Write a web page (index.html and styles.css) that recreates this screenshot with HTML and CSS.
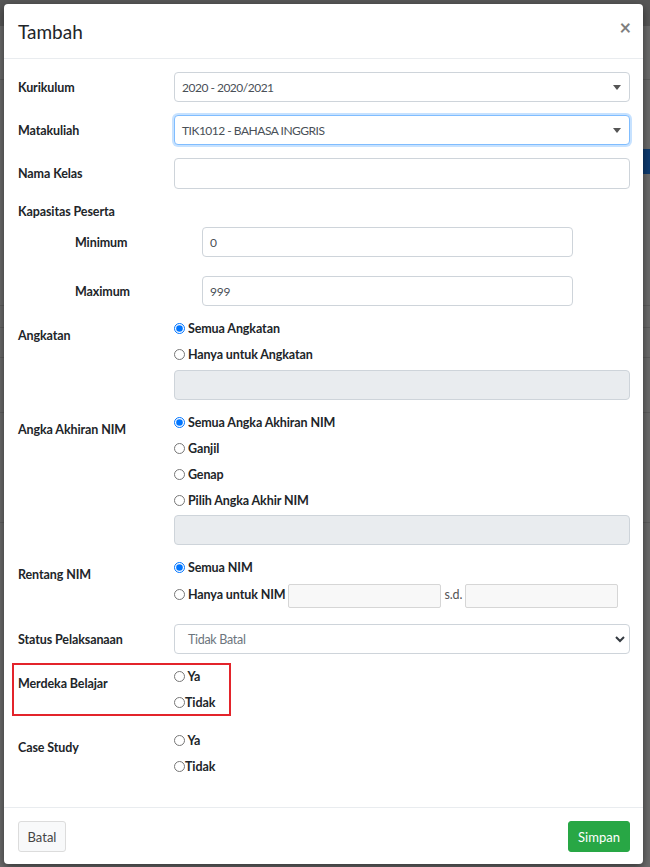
FILE: index.html
```html
<!DOCTYPE html>
<html lang="id">
<head>
<meta charset="utf-8">
<title>Tambah Kelas</title>
<link rel="stylesheet" href="styles.css">
</head>
<body>
<div class="page">
  <div class="page-nav"></div>
  <div class="page-head"></div>
  <div class="page-tools"><div class="page-btn"></div></div>
  <div class="page-table">
    <div class="page-row r1"></div>
    <div class="page-row r2"></div>
    <div class="page-row r3"></div>
    <div class="page-row r4"></div>
    <div class="page-row r5"></div>
  </div>
</div>

<div class="modal">
  <div class="modal-header">
    <h4 class="modal-title">Tambah</h4>
    <button class="close" type="button">×</button>
  </div>

  <div class="modal-body">
    <div class="field">
      <label class="lbl">Kurikulum</label>
      <div class="ctl select2">
        <span>2020 - 2020/2021</span>
        <span class="s2-arrow"></span>
      </div>
    </div>

    <div class="field">
      <label class="lbl">Matakuliah</label>
      <div class="ctl select2 focused">
        <span>TIK1012 - BAHASA INGGRIS</span>
        <span class="s2-arrow"></span>
      </div>
    </div>

    <div class="field tall">
      <label class="lbl">Nama Kelas</label>
      <div class="ctl"></div>
    </div>

    <div class="group-title">Kapasitas Peserta</div>
    <div class="sub">
      <label class="lbl">Minimum</label>
      <div class="ctl num">0</div>
    </div>
    <div class="sub last">
      <label class="lbl">Maximum</label>
      <div class="ctl num">999</div>
    </div>

    <div class="field radios">
      <label class="lbl">Angkatan</label>
      <div>
        <label class="opt"><input type="radio" name="angkatan" checked> Semua Angkatan</label>
        <label class="opt"><input type="radio" name="angkatan"> Hanya untuk Angkatan</label>
        <div class="ctl disabled gap3"></div>
      </div>
    </div>

    <div class="field radios">
      <label class="lbl">Angka Akhiran NIM</label>
      <div>
        <label class="opt"><input type="radio" name="akhir" checked> Semua Angka Akhiran NIM</label>
        <label class="opt"><input type="radio" name="akhir"> Ganjil</label>
        <label class="opt"><input type="radio" name="akhir"> Genap</label>
        <label class="opt"><input type="radio" name="akhir"> Pilih Angka Akhir NIM</label>
        <div class="ctl disabled gap2"></div>
      </div>
    </div>

    <div class="field radios rentang">
      <label class="lbl">Rentang NIM</label>
      <div>
        <label class="opt"><input type="radio" name="rentang" checked> Semua NIM</label>
        <div class="opt range"><input type="radio" name="rentang"> Hanya untuk NIM <span class="mini"></span> <span class="sd">s.d.</span> <span class="mini"></span></div>
      </div>
    </div>

    <div class="field status">
      <label class="lbl">Status Pelaksanaan</label>
      <div class="ctl native">
        <span>Tidak Batal</span>
        <svg class="chev" width="10" height="7" viewBox="0 0 10 7"><polyline points="1,1 5,5 9,1" fill="none" stroke="#343a40" stroke-width="2"/></svg>
      </div>
    </div>

    <div class="field radios marked">
      <label class="lbl">Merdeka Belajar</label>
      <div>
        <label class="opt"><input type="radio" name="mbkm"> Ya</label>
        <label class="opt"><input type="radio" name="mbkm">Tidak</label>
      </div>
      <div class="highlight"></div>
    </div>

    <div class="field radios last">
      <label class="lbl">Case Study</label>
      <div>
        <label class="opt"><input type="radio" name="cs"> Ya</label>
        <label class="opt"><input type="radio" name="cs">Tidak</label>
      </div>
    </div>
  </div>

  <div class="modal-footer">
    <button class="btn btn-default" type="button">Batal</button>
    <button class="btn btn-success" type="button">Simpan</button>
  </div>
</div>
</body>
</html>
```

FILE: styles.css
```css
* { box-sizing: border-box; }

html, body {
  margin: 0;
  height: 100%;
}

body {
  position: relative;
  overflow: hidden;
  background: #6b6b6b;
  font-family: Lato, "Liberation Sans", sans-serif;
  font-size: 12.5px;
  letter-spacing: -0.1px;
  color: #212529;
}

/* dimmed page behind the dialog */
.page { height: 867px; }
.page-nav { height: 26px; background: #575757; }
.page-head { height: 54px; border-bottom: 1px solid #5d5d5d; }
.page-tools {
  display: flex;
  justify-content: flex-end;
  padding-top: 69px;
}
.page-btn { width: 40px; height: 25px; background: #0d3b70; }
.page-table { padding-top: 110px; }
.page-row { border-bottom: 1px solid #5e5e5e; }
.page-row.r1 { height: 22px; }
.page-row.r2 { height: 22px; }
.page-row.r3 { height: 30px; }
.page-row.r4 { height: 55px; }
.page-row.r5 { height: 110px; }

/* dialog */
.modal {
  position: absolute;
  left: 4px;
  top: 4px;
  width: 639px;
  background: #fff;
  border-radius: 4px;
  box-shadow: 0 3px 9px rgba(0, 0, 0, 0.5);
}

.modal-header {
  height: 55px;
  display: flex;
  align-items: center;
  justify-content: space-between;
  padding: 0 12px 0 14px;
  border-bottom: 1px solid #e9ecef;
}

.modal-title {
  margin: 2px 0 0;
  font-size: 19px;
  font-weight: 400;
  letter-spacing: 0;
  line-height: 1.2;
}

.close {
  margin-top: -9px;
  padding: 0;
  border: 0;
  background: none;
  font-family: inherit;
  font-size: 20px;
  font-weight: 700;
  line-height: 1;
  color: #000;
  opacity: 0.5;
}

.modal-body { padding: 13px 13px 28px 14px; }

.field {
  display: grid;
  grid-template-columns: 156px 1fr;
  margin-bottom: 13px;
}
.field.tall { margin-bottom: 12px; }
.field.tall .ctl { height: 31px; }
.field.radios { margin-bottom: 9px; }
.field.rentang { margin-bottom: 14px; }
.field.status { margin-bottom: 9px; }
.field.marked { position: relative; margin-bottom: 12px; }
.field.last { margin-bottom: 0; }

.lbl {
  display: block;
  font-weight: 700;
  line-height: 20px;
  padding-top: 6px;
}
.radios .lbl { padding-top: 11px; }

.group-title {
  font-weight: 700;
  line-height: 20px;
  padding-top: 1px;
  margin-bottom: 5px;
}

.sub {
  display: grid;
  grid-template-columns: 127px 371px;
  padding-left: 57px;
  margin-bottom: 19px;
}
.sub.last { margin-bottom: 9px; }

/* form controls */
.ctl {
  height: 30px;
  display: flex;
  align-items: center;
  justify-content: space-between;
  padding: 0 7px;
  border: 1px solid #ced4da;
  border-radius: 4px;
  background: #fff;
  color: #495057;
  font-size: 12px;
  letter-spacing: -0.5px;
}

.ctl.focused {
  border-color: #80bdff;
  box-shadow: 0 0 0 2px rgba(0, 123, 255, 0.22);
}

.s2-arrow {
  width: 0;
  height: 0;
  margin-right: 1px;
  border-style: solid;
  border-width: 5px 4px 0 4px;
  border-color: #555 transparent transparent transparent;
}

.ctl.num { letter-spacing: -0.2px; }

.ctl.disabled { background: #e9ecef; }
.ctl.gap3 { margin-top: 3px; }
.ctl.gap2 { margin-top: 2px; }

.ctl.native {
  padding: 0 4px 0 13px;
  color: #6c757d;
  font-size: 12.5px;
  letter-spacing: -0.3px;
}

/* radio options */
.opt {
  display: block;
  height: 26px;
  line-height: 28px;
  font-weight: 700;
  white-space: nowrap;
}

.opt input {
  width: 11px;
  height: 11px;
  margin: 0;
  vertical-align: -1px;
}

.opt.range { height: 30px; line-height: 30px; }

.mini {
  display: inline-block;
  width: 153px;
  height: 24px;
  vertical-align: middle;
  border: 1px solid #d6d6d6;
  border-radius: 2px;
  background: #f8f8f8;
}

.sd {
  font-weight: 400;
  color: #555;
}

.highlight {
  position: absolute;
  left: -6px;
  top: 0;
  width: 219px;
  height: 53px;
  border: 2px solid #e3242b;
  pointer-events: none;
}

/* footer */
.modal-footer {
  display: flex;
  justify-content: space-between;
  padding: 13px 13px 12px 14px;
  border-top: 1px solid #e9ecef;
}

.btn {
  height: 31px;
  padding: 0;
  border-radius: 3px;
  font-family: inherit;
  font-size: 13px;
  letter-spacing: 0;
}

.btn-default {
  width: 48px;
  background: #f8f9fa;
  border: 1px solid #dcdcdc;
  color: #444;
}

.btn-success {
  width: 62px;
  background: #28a745;
  border: 1px solid #28a745;
  color: #fff;
}
```
